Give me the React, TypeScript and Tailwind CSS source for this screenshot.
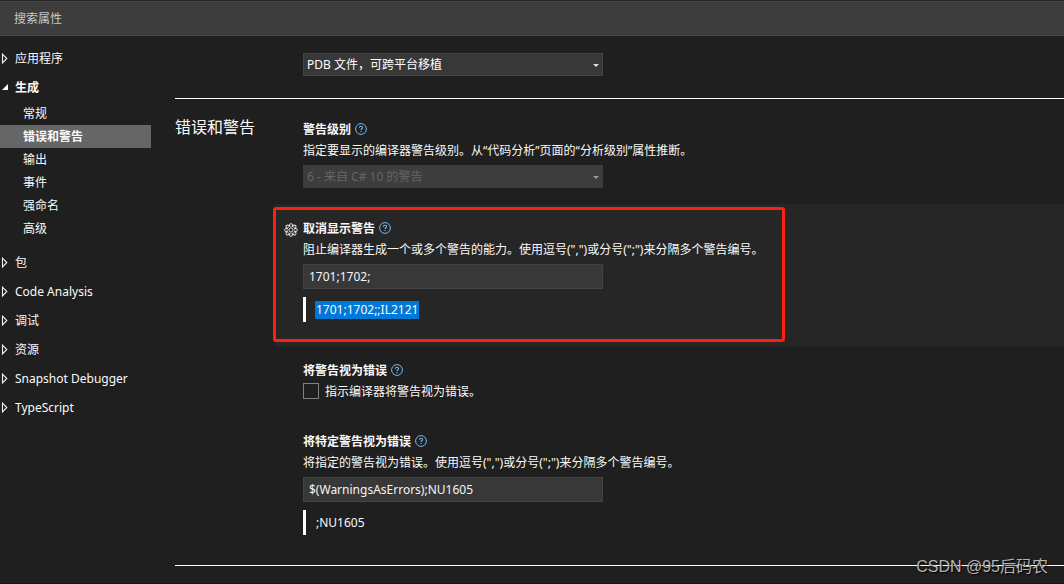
import type { ReactNode } from "react";

function Triangle({ open }: { open?: boolean }) {
  return open ? (
    <svg viewBox="0 0 8 10" className="h-2.5 w-2 shrink-0" aria-hidden="true">
      <path d="M8 1V7H2Z" fill="#fff" />
    </svg>
  ) : (
    <svg viewBox="0 0 8 12" className="h-3 w-2 shrink-0" aria-hidden="true">
      <path d="M2.5 1.2V9.8L6.8 5.5Z" fill="none" stroke="#f1f1f1" strokeWidth="1.1" />
    </svg>
  );
}

function Help({ label }: { label: string }) {
  return (
    <button type="button" aria-label={label} className="size-3">
      <svg viewBox="0 0 12 12" className="size-3" fill="none" stroke="#75b8ee">
        <circle cx="6" cy="6" r="5.4" strokeWidth="1" />
        <path d="M4.4 4.8C4.4 3.8 5.1 3.2 6 3.2S7.6 3.8 7.6 4.7C7.6 5.8 6 5.8 6 7.1" strokeWidth="1.1" />
        <path d="M6 8V9.1" strokeWidth="1.2" />
      </svg>
    </button>
  );
}

const petals = [0, 45, 90, 135, 180, 225, 270, 315];

function Gear() {
  return (
    <svg viewBox="0 0 14 14" className="size-3.5" fill="none" stroke="#e0e0e0" aria-hidden="true">
      {petals.map((a) => (
        <path
          key={a}
          d="M5.4 3.4L5.6 1.3Q7 -0.1 8.4 1.3L8.6 3.4"
          strokeWidth="1"
          transform={`rotate(${a} 7 7)`}
        />
      ))}
      <circle cx="7" cy="7" r="4" strokeWidth="0.6" />
      <circle cx="7" cy="7" r="2.1" strokeWidth="1" />
    </svg>
  );
}

function TreeItem({ label, open }: { label: string; open?: boolean }) {
  return (
    <button
      type="button"
      aria-expanded={!!open}
      className={`flex h-[29px] w-full items-center gap-[7px] text-left ${open ? "font-bold" : ""}`}
    >
      <Triangle open={open} />
      <span>{label}</span>
    </button>
  );
}

const children = ["常规", "错误和警告", "输出", "事件", "强命名", "高级"];
const rest = ["包", "Code Analysis", "调试", "资源", "Snapshot Debugger", "TypeScript"];

function Dropdown({ id, value, disabled, label }: { id: string; value: string; disabled?: boolean; label?: string }) {
  return (
    <div className="relative w-[300px]">
      <select
        id={id}
        aria-label={label}
        disabled={disabled}
        className="block h-[23px] w-full appearance-none border border-[#434346] bg-[#383838] px-[3px] leading-5 text-white opacity-100 disabled:bg-[#3d3d3d] disabled:border-[#3d3d3d] disabled:text-[#656565]"
      >
        <option>{value}</option>
      </select>
      <svg viewBox="0 0 6 3" className="pointer-events-none absolute top-[11px] right-1 h-[3px] w-1.5" aria-hidden="true">
        <path d="M0 0H6L3 3Z" fill={disabled ? "#999" : "#e0e0e0"} />
      </svg>
    </div>
  );
}

function Item({
  id,
  title,
  description,
  className = "",
  icon,
  children,
}: {
  id: string;
  title: string;
  description?: string;
  className?: string;
  icon?: ReactNode;
  children: ReactNode;
}) {
  return (
    <div className={`flex pt-3.5 ${className}`}>
      <div className="flex w-7 shrink-0 justify-center pt-[5px] pl-1">{icon}</div>
      <div className="min-w-0 flex-1">
        <div className="flex h-5 items-center gap-1">
          <label htmlFor={id} className="pt-0.5 font-bold">
            {title}
          </label>
          <Help label={`${title} 帮助`} />
        </div>
        {description && <p className="mb-0.5 h-6 leading-6 whitespace-nowrap">{description}</p>}
        {children}
      </div>
    </div>
  );
}

function ValueInput({ id, value }: { id: string; value: string }) {
  return (
    <input
      id={id}
      defaultValue={value}
      className="block h-[25px] w-[300px] border border-[#434346] bg-[#383838] px-[5px] text-[#f5f5f5] outline-none"
    />
  );
}

function Evaluated({ value, selected }: { value: string; selected?: boolean }) {
  return (
    <div className="mt-2 flex h-[25px] items-center border-l-[3px] border-white pl-[9px]">
      <span className={`h-[18px] px-px leading-[18px] ${selected ? "bg-[#0078d7]" : ""}`}>{value}</span>
    </div>
  );
}

export default function App() {
  return (
    <div className="relative flex min-h-screen flex-col border-b border-[#171313] bg-[#1f1f1f] font-['Noto_Sans','Noto_Sans_CJK_SC',sans-serif] text-xs text-[#fafafa]">
      <header className="border-t border-[#252525]">
        <input
          aria-label="搜索属性"
          placeholder="搜索属性"
          className="block h-[35px] w-full border-y border-[#464646] bg-[#3d3d3d] px-3.5 outline-none placeholder:text-[#c8c8c8] placeholder:opacity-100"
        />
      </header>

      <div className="flex flex-1 gap-6">
        <nav className="w-[151px] shrink-0 pt-2">
          <TreeItem label="应用程序" />
          <TreeItem label="生成" open />
          <ul className="mb-2">
            {children.map((c) => (
              <li key={c}>
                <a
                  href="#"
                  className={`block h-[23px] pl-[23px] leading-[23px] ${c === "错误和警告" ? "bg-[#666] font-bold" : ""}`}
                >
                  {c}
                </a>
              </li>
            ))}
          </ul>
          {rest.map((r) => (
            <TreeItem key={r} label={r} />
          ))}
        </nav>

        <main className="min-w-0 flex-1">
          <section className="border-b border-white pt-[17px] pb-[22px] pl-32">
            <Dropdown id="pdb" label="调试符号" value="PDB 文件，可跨平台移植" />
          </section>

          <section className="flex border-b border-white pt-1.5 pb-1.5">
            <h2 className="w-[100px] shrink-0 pt-2.5 text-base leading-6">错误和警告</h2>
            <div className="min-w-0 flex-1">
              <Item
                id="level"
                title="警告级别"
                description="指定要显示的编译器警告级别。从“代码分析”页面的“分析级别”属性推断。"
                className="pb-4"
              >
                <Dropdown id="level" disabled value="6 - 来自 C# 10 的警告" />
              </Item>

              <div className="relative">
                <Item
                  id="nowarn"
                  title="取消显示警告"
                  description={'阻止编译器生成一个或多个警告的能力。使用逗号(",")或分号(";")来分隔多个警告编号。'}
                  className="bg-[#262626] pb-6"
                  icon={<Gear />}
                >
                  <ValueInput id="nowarn" value="1701;1702;" />
                  <Evaluated value="1701;1702;;IL2121" selected />
                </Item>
                <div className="pointer-events-none absolute top-[3px] -left-0.5 h-[135px] w-[512px] rounded-[3px] border-3 border-[#ff1e12]" />
              </div>

              <Item id="aserror" title="将警告视为错误" className="pb-[18px]">
                <div className="mt-[3px] flex h-4 items-center gap-1.5">
                  <input
                    id="aserror"
                    type="checkbox"
                    className="size-4 appearance-none border border-[#808080] bg-[#1f1f1f] checked:bg-[#0078d7]"
                  />
                  <span className="pt-0.5">指示编译器将警告视为错误。</span>
                </div>
              </Item>

              <Item
                id="specific"
                title="将特定警告视为错误"
                description={'将指定的警告视为错误。使用逗号(",")或分号(";")来分隔多个警告编号。'}
                className="pb-6"
              >
                <ValueInput id="specific" value="$(WarningsAsErrors);NU1605" />
                <Evaluated value=";NU1605" />
              </Item>
            </div>
          </section>
        </main>
      </div>

      <div className="pointer-events-none absolute right-4 bottom-1 font-['Liberation_Sans','Noto_Sans_CJK_SC',sans-serif] text-base leading-6 text-[#b4b4b4] [text-shadow:1px_1px_1px_#000]">
        CSDN @95后码农
      </div>
    </div>
  );
}
